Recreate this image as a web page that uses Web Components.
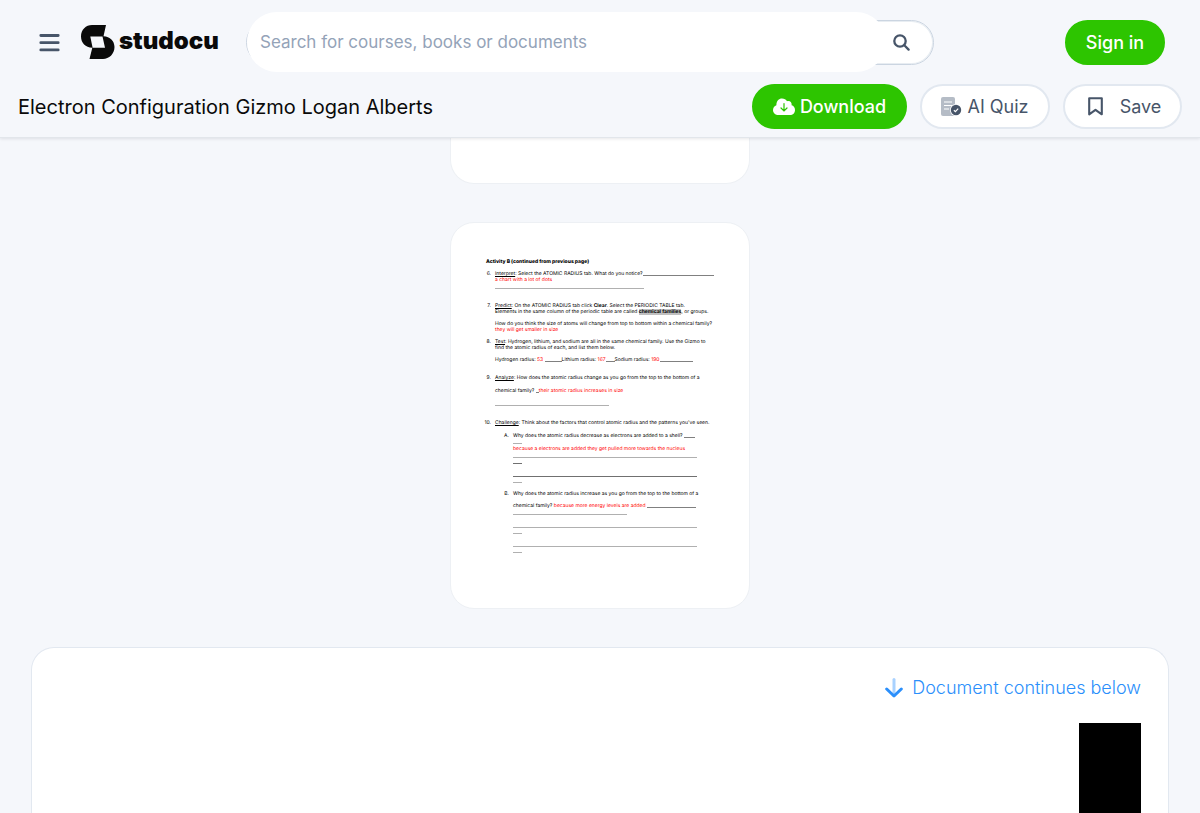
<!DOCTYPE html>
<html lang="en">
<head>
<meta charset="utf-8">
<meta name="viewport" content="width=device-width, initial-scale=1">
<title>Electron Configuration Gizmo Logan Alberts - Studocu</title>
<style>
  html { background: #f5f7fb; }
  body { margin: 0; height: 100vh; overflow: hidden; font-family: Inter, "Open Sans", sans-serif; color: #0a0a0a; }
</style>
</head>
<body>
<doc-page></doc-page>

<script>
const define = (name, html, setup) => customElements.define(name, class extends HTMLElement {
  constructor() {
    super();
    const root = this.attachShadow({ mode: "open" });
    root.innerHTML = html;
    if (setup) setup(this, root);
  }
});

define("studocu-logo", `
  <style>
    :host { display: block; }
    a { display: flex; align-items: center; gap: 4px; color: #0a0a0a; text-decoration: none; }
    svg { width: 34px; height: 34px; flex: none; }
    span { font-size: 24px; font-weight: 900; line-height: 30px; margin-top: -2px; }
  </style>
  <a href="#" aria-label="Studocu home">
    <svg viewBox="0 0 34 34" aria-hidden="true">
      <path fill="#0a0a0a" fill-rule="evenodd" d="M11 0H25L22.500 11.200C29 11.500 33.500 16 33.500 22C33.500 29 28 34 22 34H8.500L11.300 22.800C4.500 22.300 0 18 0 11.500C0 4.500 5 0 11 0ZM9.300 11.600L11.600 22.800H24L21.500 11.600Z"/>
    </svg>
    <span>studocu</span>
  </a>`);

define("menu-button", `
  <style>
    :host { display: block; }
    button { display: block; padding: 0; border: 0; background: none; }
    svg { display: block; width: 21px; height: 20px; }
  </style>
  <button type="button" aria-label="Menu">
    <svg viewBox="0 0 21 20" fill="none" stroke="#475569" stroke-width="2.800" stroke-linecap="round"><path d="M1.800 3.500H19.200M1.800 10.700H19.200M1.800 17.900H19.200"/></svg>
  </button>`);

define("search-field", `
  <style>
    :host { display: block; }
    form { box-sizing: border-box; height: 45px; display: flex; align-items: center; background: #fff;
      border: 1px solid #cbd5e1; border-radius: 23px; box-shadow: inset 0 0 0 1px #e8edf2; }
    input { flex: 1; min-width: 0; box-sizing: border-box; height: 60px; padding: 0 13px; border: 0; border-radius: 30px;
      background: #fff; font: 17px Inter, sans-serif; color: #0a0a0a; outline: 0; }
    input::placeholder { color: #94a3b8; opacity: 1; }
    button { width: 47px; height: 43px; padding: 0 15px 0 7px; box-sizing: border-box; border: 0; background: none; }
    svg { display: block; width: 17px; height: 17px; }
  </style>
  <form role="search">
    <input type="text" aria-label="Search" placeholder="Search for courses, books or documents">
    <button type="button" aria-label="Search">
      <svg viewBox="0 0 17 17" fill="none" stroke="#475569" stroke-width="2.300" stroke-linecap="round"><circle cx="7" cy="7" r="5.700"/><path d="M11.300 11.300L15.600 15.600"/></svg>
    </button>
  </form>`);

define("pill-button", `
  <style>
    :host { display: block; }
    button { box-sizing: border-box; width: 100%; height: 45px; display: flex; align-items: center; justify-content: center;
      gap: 5px; padding: 0; border: 2px solid #e2e8f0; border-radius: 23px; background: #fff; color: #475569;
      font: 400 18px Inter, sans-serif; white-space: nowrap; }
    :host([primary]) button { background: #2dc500; border-color: #2dc500; color: #fff; font-weight: 500; }
    :host([wide-gap]) button { gap: 17px; padding-left: 4px; }
    ::slotted(svg) { flex: none; display: block; }
  </style>
  <button type="button"><slot name="icon"></slot><slot></slot></button>`);

define("top-bar", `
  <style>
    :host { display: block; position: relative; background: #f5f7fb; border-bottom: 1px solid #e2e6eb; box-shadow: 0 1px 3px #0f172a1a; }
    .main { display: flex; align-items: center; height: 44px; padding: 20px 35px 20px 39px; }
    studocu-logo { margin-left: 21px; width: 139px; }
    search-field { margin-left: 26px; flex: 0 1 688px; }
    .sign { margin-left: auto; width: 100px; }
    .title { display: flex; align-items: center; gap: 13px; padding: 0 18px 8px; height: 45px; }
    h1 { flex: 1; margin: 0; font-size: 20px; line-height: 28px; font-weight: 400; white-space: nowrap; color: #0a0a0a; }
    .download { width: 155px; } .quiz { width: 130px; } .save { width: 119px; }
  </style>
  <header>
    <div class="main">
      <menu-button></menu-button>
      <studocu-logo></studocu-logo>
      <search-field></search-field>
      <pill-button class="sign" primary>Sign in</pill-button>
    </div>
    <div class="title">
      <h1>Electron Configuration Gizmo Logan Alberts</h1>
      <pill-button class="download" primary>
        <svg slot="icon" width="22" height="17" viewBox="0 0 22 17"><path fill="#fff" d="M5 17C2.200 17 0 14.800 0 12C0 9.700 1.400 7.900 3.400 7.200C3.300 3.200 5.800.5 9 .5C11.200.5 13 1.600 14 3.200C17 2.300 19.200 4.500 18.600 7.300C20.700 7.800 22 9.600 22 11.900C22 14.800 19.900 17 17 17Z"/><path d="M11 5.500V12.500M8 10L11 13L14 10" fill="none" stroke="#2dc500" stroke-width="1.200" stroke-linecap="round"/></svg>
        Download
      </pill-button>
      <pill-button class="quiz">
        <svg slot="icon" width="21" height="19" viewBox="0 0 21 19"><rect width="14" height="19" rx="2" fill="#b5bcc6"/><path d="M3 5H11M3 8.500H11M3 12H8" stroke="#fff" stroke-width="1.200"/><circle cx="15" cy="13" r="6" fill="#fff"/><circle cx="15" cy="13" r="5.200" fill="#475569"/><path d="M12.900 13.200L14.400 14.600L17.200 11.600" fill="none" stroke="#fff" stroke-width="1.200"/></svg>
        AI Quiz
      </pill-button>
      <pill-button class="save" wide-gap>
        <svg slot="icon" width="15" height="19" viewBox="0 0 15 19"><path d="M1.200 1.200H13.800V17.300L7.500 12.800L1.200 17.300Z" fill="none" stroke="#475569" stroke-width="2.100" stroke-linejoin="round"/></svg>
        Save
      </pill-button>
    </div>
  </header>`);

define("paper-sheet", `
  <style>
    :host { display: block; box-sizing: border-box; width: 300px; margin: 0 auto; background: #fff; border: 1px solid #edf0f4; border-radius: 24px; }
    :host([ending]) { height: 46px; border-top: 0; border-radius: 0 0 24px 24px; }
    :host([full]) { height: 387px; padding: 35px; }
  </style>
  <slot></slot>`);

/* One line of the worksheet; "num" is the list marker, "rule" draws an answer line of that width. */
define("work-line", `
  <style>
    :host { display: flex; height: 6px; font: 5px/6px Inter, Arial, sans-serif; color: #000; white-space: pre; text-rendering: geometricPrecision; }
    .mark { flex: none; box-sizing: border-box; width: 9px; padding-right: 4px; display: flex; justify-content: flex-end; }
    :host([sub]) .mark { width: 27px; }
    :host([heading]) { font-weight: 800; }
    :host([heading]) .mark { display: none; }
    :host([rule]) .text { height: 3px; border-bottom: 1px solid #b0b0b0; }
    :host([dark]) .text { border-color: #707070; }
    :host([answer]) { color: #f00; }
    ::slotted(em) { font-style: normal; color: #f00; }
    ::slotted(i) { display: inline-block; height: 4px; border-bottom: 1px solid #808080; vertical-align: top; }
    ::slotted(mark) { background: #c0c0c0; color: inherit; font-weight: 700; }
  </style>
  <span class="mark"></span><span class="text"><slot></slot></span>`,
  (el, root) => {
    root.querySelector(".mark").textContent = el.getAttribute("num") || "";
    if (el.hasAttribute("rule")) root.querySelector(".text").style.width = el.getAttribute("rule") + "px";
  });

define("work-sheet", `
  <style>
    :host { display: block; padding-top: 1px; }
    .g { margin-top: 6px; } .h { margin-top: 7px; } .s { margin-top: 2px; } .w { margin-top: 8px; }
    .l { margin-top: 12px; } .t { margin-top: 1px; }
    .b1 { width: 3px; } .b3 { width: 9px; } .b4 { width: 11px; } .b6 { width: 17px; } .b12 { width: 33px; } .b16 { width: 49px; } .b23 { width: 71px; }
  </style>
  <work-line heading>Activity B (continued from previous page)</work-line>
  <work-line class="g" num="6."><u>Interpret</u>: Select the ATOMIC RADIUS tab. What do you notice?<i class="b23"></i></work-line>
  <work-line answer>a chart with a lot of dots</work-line>
  <work-line class="s" rule="149"></work-line>
  <work-line class="l" num="7."><u>Predict</u>: On the ATOMIC RADIUS tab click <b>Clear</b>. Select the PERIODIC TABLE tab.</work-line>
  <work-line>Elements in the same column of the periodic table are called <mark>chemical families</mark>, or groups.</work-line>
  <work-line class="g">How do you think the size of atoms will change from top to bottom within a chemical family?</work-line>
  <work-line answer>they will get smaller in size</work-line>
  <work-line class="g" num="8."><u>Test</u>: Hydrogen, lithium, and sodium are all in the same chemical family. Use the Gizmo to</work-line>
  <work-line>find the atomic radius of each, and list them below.</work-line>
  <work-line class="g">Hydrogen radius: <em>53 </em><i class="b6"></i>Lithium radius: <em>167</em><i class="b3"></i>Sodium radius: <em>190</em><i class="b12"></i></work-line>
  <work-line class="l" num="9."><u>Analyze</u>: How does the atomic radius change as you go from the top to the bottom of a</work-line>
  <work-line class="h">chemical family? <i class="b1"></i><em>their atomic radius increases in size</em></work-line>
  <work-line class="w" rule="114"></work-line>
  <work-line class="l" num="10."><u>Challenge</u>: Think about the factors that control atomic radius and the patterns you've seen.</work-line>
  <work-line sub class="h" num="A.">Why does the atomic radius decrease as electrons are added to a shell? <i class="b4"></i></work-line>
  <work-line sub class="t" rule="9"></work-line>
  <work-line sub answer>because a electrons are added they get pulled more towards the nucleus</work-line>
  <work-line sub class="s" rule="184"></work-line>
  <work-line sub dark rule="9"></work-line>
  <work-line sub dark class="h" rule="184"></work-line>
  <work-line sub rule="9"></work-line>
  <work-line sub class="g" num="B.">Why does the atomic radius increase as you go from the top to the bottom of a</work-line>
  <work-line sub class="g">chemical family? <em>because more energy levels are added </em><i class="b16"></i></work-line>
  <work-line sub class="s" rule="114"></work-line>
  <work-line sub class="h" rule="184"></work-line>
  <work-line sub rule="9"></work-line>
  <work-line sub class="h" rule="184"></work-line>
  <work-line sub rule="9"></work-line>`);

define("continue-card", `
  <style>
    :host { display: block; margin: 0 31px; padding: 27px 27px 0; background: #fff; border: 1px solid #e2e8f0; border-bottom: 0; border-radius: 23px 23px 0 0; }
    a { display: flex; align-items: center; justify-content: flex-end; gap: 9px; font-size: 18px; font-weight: 300; line-height: 26px; color: #2b8ffb; text-decoration: none; }
    .block { width: 62px; height: 90px; margin: 22px 0 0 auto; background: #000; }
  </style>
  <a href="#">
    <svg width="18" height="20" viewBox="0 0 18 20" fill="none" stroke-linecap="round" stroke-linejoin="round" stroke-width="3" aria-hidden="true"><path stroke="#a9d2ff" d="M9 1.500V16"/><path stroke="#2b8ffb" d="M1.700 11L9 18L16.300 11"/></svg>
    Document continues below
  </a>
  <div class="block"></div>`);

define("doc-page", `
  <style>
    :host { display: block; }
    main { display: flex; flex-direction: column; gap: 38px; }
  </style>
  <top-bar></top-bar>
  <main>
    <paper-sheet ending></paper-sheet>
    <paper-sheet full><work-sheet></work-sheet></paper-sheet>
    <continue-card></continue-card>
  </main>`);
</script>
</body>
</html>
